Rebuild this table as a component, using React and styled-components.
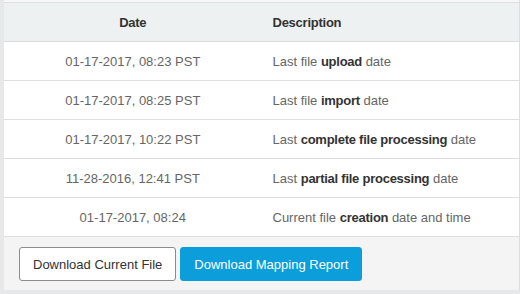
import React from 'react';
import styled, {createGlobalStyle} from 'styled-components';

const GlobalStyle = createGlobalStyle`
    body {
        margin: 0;
        background: #e7e8ea;
        font-family: "Liberation Sans", Arial, Helvetica, sans-serif;
    }
`;

const rows = [
    {date: '01-17-2017, 08:23 PST', pre: 'Last file ', bold: 'upload', post: ' date'},
    {date: '01-17-2017, 08:25 PST', pre: 'Last file ', bold: 'import', post: ' date'},
    {date: '01-17-2017, 10:22 PST', pre: 'Last ', bold: 'complete file processing', post: ' date'},
    {date: '11-28-2016, 12:41 PST', pre: 'Last ', bold: 'partial file processing', post: ' date'},
    {date: '01-17-2017, 08:24', pre: 'Current file ', bold: 'creation', post: ' date and time'},
];

function App() {
    return (
        <Page>
            <GlobalStyle/>
            <Panel>
                <Table>
                    <thead>
                        <tr>
                            <HeadCell $center>Date</HeadCell>
                            <HeadCell>Description</HeadCell>
                        </tr>
                    </thead>
                    <tbody>
                        {rows.map((r) => (
                            <tr key={r.bold}>
                                <Cell $center>{r.date}</Cell>
                                <Cell>{r.pre}<strong>{r.bold}</strong>{r.post}</Cell>
                            </tr>
                        ))}
                    </tbody>
                </Table>
                <Footer>
                    <Button>Download Current File</Button>
                    <Button $primary>Download Mapping Report</Button>
                </Footer>
            </Panel>
        </Page>
    )
}

const Page = styled.div`
    padding: 0 0 4px 4px;
`;

const Panel = styled.div`
    background: #f6f7f7;
    padding-top: 2px;
    border-right: 1px solid #dcdddd;
`;

const Table = styled.table`
    width: 100%;
    border-collapse: collapse;
    table-layout: fixed;
    border-top: 1px solid #dedfe0;
    background: #fff;
    font-size: 13px;
`;

const HeadCell = styled.th`
    height: 38px;
    padding: 0 11px;
    background: #eef1f2;
    color: #333;
    font-weight: bold;
    letter-spacing: -0.25px;
    text-align: ${p => p.$center ? 'center' : 'left'};
    border-bottom: 1px solid #dcdcdc;
`;

const Cell = styled.td`
    height: 38px;
    padding: 0 11px;
    color: #666;
    text-align: ${p => p.$center ? 'center' : 'left'};
    border-bottom: 1px solid #dedede;

    strong {
        color: #333;
        letter-spacing: -0.25px;
    }
`;

const Footer = styled.div`
    display: flex;
    gap: 4px;
    padding: 10px 15px 9px;
    background: #f4f4f4;
`;

const Button = styled.button`
    height: 34px;
    padding: 0 13px;
    font-family: inherit;
    font-size: 13px;
    border-radius: 3px;
    cursor: pointer;
    color: ${p => p.$primary ? '#fff' : '#333'};
    background: ${p => p.$primary ? '#0b9edb' : '#fff'};
    border: 1px solid ${p => p.$primary ? '#0b9edb' : '#8c8c8c'};
`;

export default App
